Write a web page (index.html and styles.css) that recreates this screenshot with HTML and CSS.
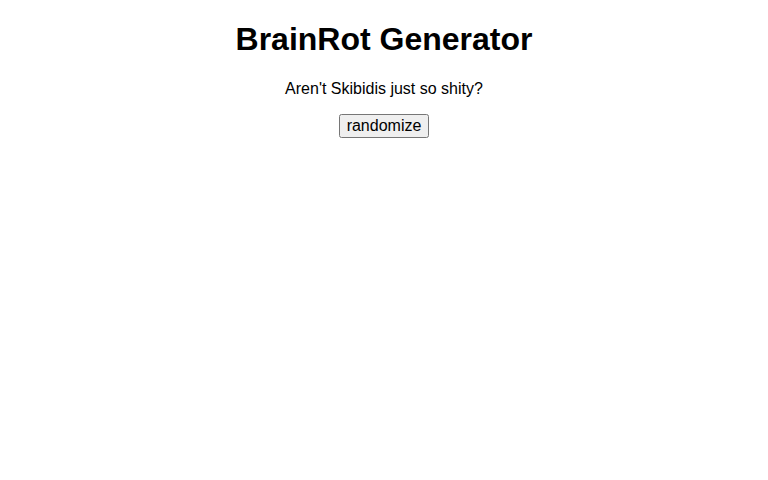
FILE: index.html
```html
<!DOCTYPE html>
<html lang="en">
<head>
  <meta charset="UTF-8">
  <title>BrainRot Generator</title>
  <link rel="stylesheet" href="styles.css">
</head>
<body>
  <h1>BrainRot Generator</h1>
  <p id="phrase">Aren't Skibidis just so shity?</p>
  <button id="randomize">randomize</button>
</body>
</html>
```

FILE: styles.css
```css
body {
  margin: 0 8px;
  font-family: "Liberation Sans", Arial, sans-serif;
  text-align: center;
}
#randomize {
  font-family: "Liberation Sans", Arial, sans-serif;
  font-size: 16px;
}
```
